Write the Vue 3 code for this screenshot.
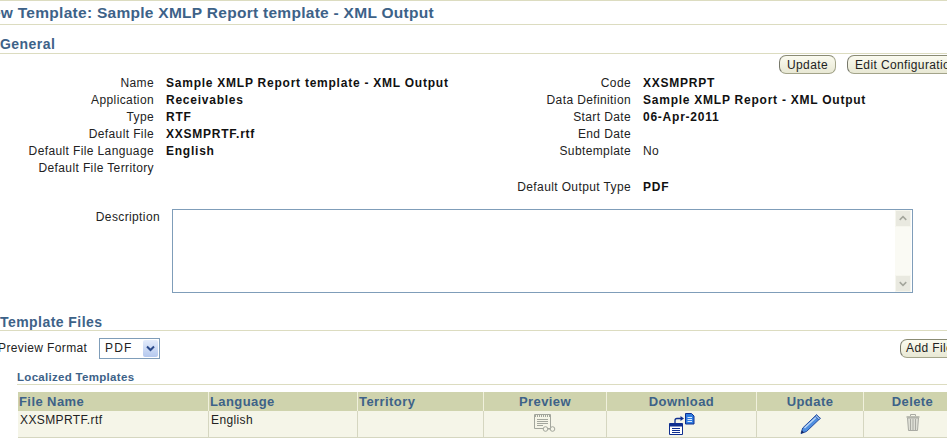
<script setup>
const left = [
  ['Name', 'Sample XMLP Report template - XML Output', true],
  ['Application', 'Receivables', true],
  ['Type', 'RTF', true],
  ['Default File', 'XXSMPRTF.rtf', true],
  ['Default File Language', 'English', true],
  ['Default File Territory', '', true],
]
const right = [
  ['Code', 'XXSMPRPT', true],
  ['Data Definition', 'Sample XMLP Report - XML Output', true],
  ['Start Date', '06-Apr-2011', true],
  ['End Date', '', true],
  ['Subtemplate', 'No', false],
]
</script>

<template>
  <div class="viewport">
    <div class="page">
      <h1 class="title">View Template: Sample XMLP Report template - XML Output</h1>
      <h2 class="section general">General</h2>

      <div class="actions">
        <button class="btn">Update</button>
        <button class="btn edit">Edit Configuration</button>
      </div>

      <div class="details">
        <div class="col col-left">
          <div v-for="r in left" :key="r[0]" class="row">
            <span class="lab">{{ r[0] }}</span>
            <span class="val" :class="{ strong: r[2] }">{{ r[1] }}</span>
          </div>
        </div>
        <div class="col col-right">
          <div v-for="r in right" :key="r[0]" class="row">
            <span class="lab">{{ r[0] }}</span>
            <span class="val" :class="{ strong: r[2] }">{{ r[1] }}</span>
          </div>
          <div class="row output">
            <span class="lab">Default Output Type</span>
            <span class="val strong">PDF</span>
          </div>
        </div>
      </div>

      <div class="desc">
        <span class="desc-lab">Description</span>
        <div class="textarea">
          <div class="scroll">
            <span class="arrow"><svg width="15" height="15" viewBox="0 0 15 15"><path d="M4 9l3.5-3.5L11 9" fill="none" stroke="#a4a69c" stroke-width="1.6"/></svg></span>
            <span class="arrow"><svg width="15" height="15" viewBox="0 0 15 15"><path d="M4 6l3.5 3.5L11 6" fill="none" stroke="#a4a69c" stroke-width="1.6"/></svg></span>
          </div>
        </div>
      </div>

      <h2 class="section files">Template Files</h2>
      <div class="preview-row">
        <span class="preview-lab">Preview Format</span>
        <div class="select">
          <span class="select-text">PDF</span>
          <span class="select-btn"><svg width="9" height="7" viewBox="0 0 9 7"><path d="M1 1.5l3.500 3.500L8 1.500" fill="none" stroke="#2b4a8b" stroke-width="2"/></svg></span>
        </div>
        <button class="btn add">Add File</button>
      </div>

      <h3 class="sub">Localized Templates</h3>
      <div class="table">
        <div class="th tl">File Name</div>
        <div class="th tl">Language</div>
        <div class="th tl">Territory</div>
        <div class="th">Preview</div>
        <div class="th">Download</div>
        <div class="th">Update</div>
        <div class="th">Delete</div>
        <div class="td">XXSMPRTF.rtf</div>
        <div class="td">English</div>
        <div class="td"></div>
        <div class="td ic">
          <svg class="i-preview" width="23" height="18" viewBox="0 0 23 18" fill="none" stroke="#a3a69d">
            <path d="M.5.5h16v14H.5z"/>
            <path d="M1 2h15" stroke-width="2" stroke-dasharray="1 1"/>
            <path d="M3 5.500h11M3 7.500h11M3 9.500h11M3 11.500h6"/>
            <circle cx="11.500" cy="15" r="2.300" fill="#f5f5e8"/><circle cx="18.500" cy="15" r="2.300" fill="#f5f5e8"/>
            <path d="M13.800 15h2.400"/>
          </svg>
        </div>
        <div class="td ic">
          <svg class="i-download" width="26" height="22" viewBox="0 0 26 22">
            <path d="M.5 10.500h13v11H.5z" fill="#fff" stroke="#0f2f8f"/>
            <path d="M.5 10.500h13v3H.5z" fill="#0f2f8f"/>
            <path d="M3 15.500h8M3 17.500h8M3 19.500h8" stroke="#0f2f8f"/>
            <path d="M6 10V7.500Q6 5.500 8 5.500h4" fill="none" stroke="#0f2f8f" stroke-width="1.300"/>
            <path d="M11.500 3l3.500 2.500-3.500 2.500z" fill="#0f2f8f"/>
            <path d="M16.500.5h6l2.500 2.500v8h-8.500z" fill="#2f7ce0" stroke="#0f2f8f"/>
            <path d="M18.500 4.500h4.500M18.500 6.500h4.500M18.500 8.500h4.500" stroke="#dbe9fb"/>
          </svg>
        </div>
        <div class="td ic">
          <svg class="i-edit" width="21" height="20" viewBox="0 0 21 20">
            <path d="M16.500.8L20.300 4.300 6.500 17.500 1 19.500 2.700 14z" fill="#4f8fe0" stroke="#244a9e"/>
            <path d="M4.500 14L17 2.500" stroke="#bcd6f4" stroke-width="1.500"/>
            <path d="M16.500.8L20.300 4.300 18.800 5.800 15 2.300z" fill="#8fb8ec" stroke="#244a9e" stroke-width=".7"/>
            <path d="M1 19.500l.9-3 2.100 2z" fill="#14245c"/>
          </svg>
        </div>
        <div class="td ic">
          <svg class="i-trash" width="14" height="17" viewBox="0 0 14 17" fill="none" stroke="#a9aaa3">
            <path d="M.5 3h13" stroke-width="1.500"/>
            <path d="M4.500 2V.500h5V2"/>
            <path d="M1.500 4l1 12.500h9l1-12.500z" fill="#dedfd6"/>
            <path d="M4.500 5v11M7 5v11M9.500 5v11"/>
          </svg>
        </div>
      </div>
    </div>
  </div>
</template>

<style>
html, body { margin: 0; background: #fff; overflow: hidden; }
</style>

<style scoped>
.viewport { width: 947px; height: 438px; overflow: hidden; background: #fff; font-family: "Liberation Sans", Arial, sans-serif; font-size: 12px; color: #222; }
.page { width: 947px; }
h1, h2, h3 { margin: 0; color: #3d6288; font-weight: bold; }
.title { margin-left: -23px; width: 970px; border-top: 1px solid #dcdcc0; border-bottom: 1px solid #dcdcc0; font-size: 15.5px; line-height: 22px; height: 22px; padding-top: 1px; letter-spacing: .28px; white-space: nowrap; }
.section { font-size: 14px; line-height: 17px; height: 17px; border-bottom: 1px solid #dcdcc0; letter-spacing: .45px; }
.general { margin-top: 11px; }
.actions { display: flex; gap: 11px; margin-left: 779px; width: 240px; margin-top: 1px; height: 19px; }
.btn { height: 19px; padding: 0 7px; border: 1px solid #a3a48a; border-radius: 7px; border-top-color: #8a8b74; border-left-color: #77786a; background: linear-gradient(#fbfbf0, #e8e8d4); font: 12px "Liberation Sans", Arial, sans-serif; letter-spacing: .38px; color: #222; white-space: nowrap; flex: none; }
.edit { width: 116px; text-align: left; }
.details { display: grid; grid-template-columns: 477px 470px; height: 134px; margin-top: 1px; }
.col { display: flex; flex-direction: column; }
.row { display: flex; height: 17px; line-height: 17px; align-items: center; white-space: nowrap; }
.lab { width: 154px; text-align: right; letter-spacing: .38px; flex: none; }
.val { margin-left: 12px; letter-spacing: .38px; }
.strong { font-weight: bold; color: #111; letter-spacing: .76px; }
.output { margin-top: 19px; }
.desc { display: flex; }
.desc-lab { width: 160px; text-align: right; letter-spacing: .38px; line-height: 15px; padding-top: 1px; flex: none; }
.textarea { margin-left: 12px; width: 739px; height: 82px; border: 1px solid #7f9db9; display: flex; justify-content: flex-end; }
.scroll { width: 16px; display: flex; flex-direction: column; justify-content: space-between; background: #fafaf4; margin-right: 1px; }
.arrow { height: 17px; display: flex; align-items: center; justify-content: center; background: #e9e9e0; border: 1px solid #f6f6ee; box-sizing: border-box; }
.files { margin-top: 20px; line-height: 19px; }
.preview-row { display: flex; align-items: center; height: 24px; margin-top: 5px; }
.preview-lab { margin-left: -2px; letter-spacing: .38px; width: 101px; flex: none; }
.select { width: 61px; height: 21px; box-sizing: border-box; border: 1px solid #7f9db9; display: flex; align-items: center; justify-content: space-between; padding: 1px; flex: none; }
.select-text { padding-left: 4px; letter-spacing: 1.2px; }
.select-btn { width: 15px; height: 17px; background: linear-gradient(#e4ecfb, #b4c8ee); border-radius: 2px; display: flex; align-items: center; justify-content: center; }
.add { margin-left: 740px; padding: 0 5px; }
.sub { margin: 10px 0 0 17px; font-size: 11.5px; line-height: 14px; height: 14px; border-bottom: 1px solid #dcdcc0; letter-spacing: .3px; }
.table { margin: 7px 0 0 18px; display: grid; grid-template-columns: 191px 149px 126px 123px 150px 107px 98px; grid-template-rows: 19px 27px; width: 944px; }
.th { background: #cfd3ad; color: #3d6288; font-weight: bold; font-size: 13px; line-height: 19px; text-align: center; letter-spacing: .42px; border-right: 1px solid #f0f0dc; padding: 0 1px; box-sizing: border-box; }
.tl { text-align: left; }
.td { background: #f5f5e8; border-right: 1px solid #d5d6c0; border-bottom: 1px solid #d5d6c0; padding: 1px 2px; box-sizing: border-box; letter-spacing: .38px; line-height: 17px; overflow: hidden; }
.ic { display: flex; justify-content: center; align-items: flex-start; padding: 3px 0 0; }
.i-download { margin-top: -1px; }
</style>
